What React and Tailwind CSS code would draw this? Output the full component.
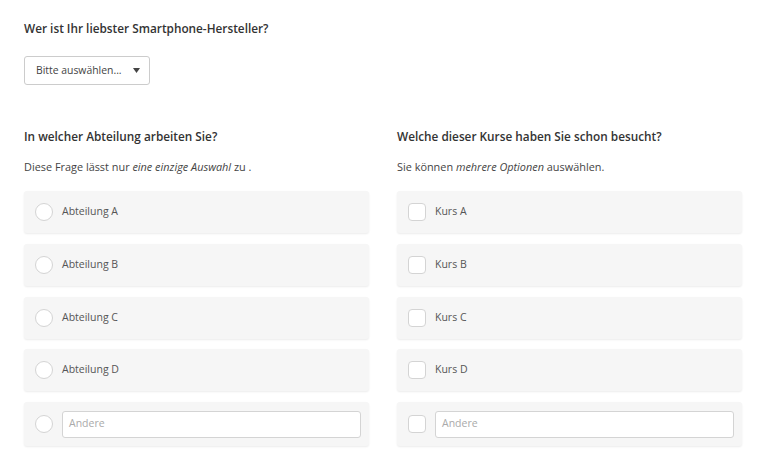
export default function App() {
  const radios = ["Abteilung A", "Abteilung B", "Abteilung C", "Abteilung D"];
  const checks = ["Kurs A", "Kurs B", "Kurs C", "Kurs D"];
  const card = "flex items-center h-[42px] pl-[11px] pr-[8px] rounded-[3px] bg-[#f6f6f6] shadow-[0_1px_2px_rgba(0,0,0,0.08)]";
  return (
    <div className="w-[768px] h-[466px] bg-white px-6 pt-[19px] text-[#333]" style={{ fontFamily: '"Open Sans", sans-serif' }}>
      <div className="text-[11.8px] font-semibold leading-[18px]">Wer ist Ihr liebster Smartphone-Hersteller?</div>
      <div className="mt-[19px] flex items-center w-[126px] h-[29px] border border-[#ccc] rounded-[3px] pl-[11px] text-[10.4px] text-[#444]">
        <span>Bitte auswählen...</span>
        <svg className="ml-[11px]" width="7" height="5" viewBox="0 0 7 5"><path d="M0 0 L7 0 L3.5 5 Z" fill="#444" /></svg>
      </div>
      <div className="mt-[42px] grid grid-cols-2 gap-x-[28px] w-[718px]">
        <div>
          <div className="text-[11.8px] font-semibold leading-[18px]">In welcher Abteilung arbeiten Sie?</div>
          <div className="mt-[14px] text-[10.9px] leading-[16px] text-[#444]">Diese Frage lässt nur <i>eine einzige Auswahl</i> zu .</div>
          <div className="mt-[16px] flex flex-col gap-[10.75px]">
            {radios.map((r) => (
              <div key={r} className={card}>
                <span className="w-[18px] h-[18px] rounded-full border border-[#d4d4d4] bg-white shrink-0" />
                <span className="ml-[9px] text-[10.5px] text-[#555]">{r}</span>
              </div>
            ))}
            <div className={card + " h-[44px]"}>
              <span className="w-[18px] h-[18px] rounded-full border border-[#d4d4d4] bg-white shrink-0" />
              <div className="ml-[9px] flex-1 h-[27px] border border-[#d4d4d4] rounded-[3px] bg-white flex items-center px-[6px] text-[10.5px] text-[#aaa]">Andere</div>
            </div>
          </div>
        </div>
        <div>
          <div className="text-[11.8px] font-semibold leading-[18px]">Welche dieser Kurse haben Sie schon besucht?</div>
          <div className="mt-[14px] text-[10.9px] leading-[16px] text-[#444]">Sie können <i>mehrere Optionen</i> auswählen.</div>
          <div className="mt-[16px] flex flex-col gap-[10.75px]">
            {checks.map((r) => (
              <div key={r} className={card}>
                <span className="w-[18px] h-[18px] rounded-[4px] border border-[#d4d4d4] bg-white shrink-0" />
                <span className="ml-[9px] text-[10.5px] text-[#555]">{r}</span>
              </div>
            ))}
            <div className={card + " h-[44px]"}>
              <span className="w-[18px] h-[18px] rounded-[4px] border border-[#d4d4d4] bg-white shrink-0" />
              <div className="ml-[9px] flex-1 h-[27px] border border-[#d4d4d4] rounded-[3px] bg-white flex items-center px-[6px] text-[10.5px] text-[#aaa]">Andere</div>
            </div>
          </div>
        </div>
      </div>
    </div>
  );
}
